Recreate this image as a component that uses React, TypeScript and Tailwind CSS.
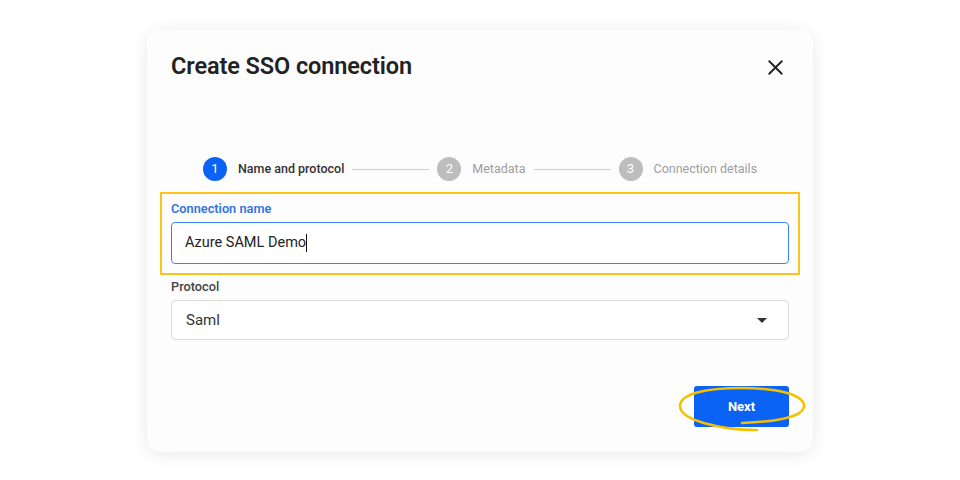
import { X } from "lucide-react";

const steps = [
  { n: 1, label: "Name and protocol", active: true },
  { n: 2, label: "Metadata", active: false },
  { n: 3, label: "Connection details", active: false },
];

export default function App() {
  return (
    <div
      className="min-h-screen w-full bg-white flex justify-center pt-[30px]"
      style={{ fontFamily: "Roboto, 'Liberation Sans', sans-serif" }}
    >
      <div className="w-[666px] h-[422px] rounded-[14px] bg-[#fdfdfd] shadow-[0_2px_18px_rgba(0,0,0,0.09)] px-[24px] pt-[21px]">
        <div className="flex items-center justify-between h-[32px]">
          <h1 className="text-[23.5px] font-semibold text-[#222] tracking-[-0.1px]">Create SSO connection</h1>
          <X className="w-[25px] h-[25px] text-[#222] mr-[1px]" strokeWidth={1.8} />
        </div>

        <div className="mt-[74px] flex items-center justify-center h-[24px]">
          {steps.map((s, i) => (
            <div key={s.n} className="flex items-center">
              <div
                className={
                  "w-[24px] h-[24px] rounded-full flex items-center justify-center text-[13px] text-white " +
                  (s.active ? "bg-[#0b63f6]" : "bg-[#bdbdbd]")
                }
              >
                {s.n}
              </div>
              <span
                className={
                  "ml-[11px] text-[12.5px] " +
                  (s.active ? "font-medium text-[#333]" : "text-[#9e9e9e]")
                }
              >
                {s.label}
              </span>
              {i < steps.length - 1 && <div className="mx-[8px] w-[77px] h-px bg-[#cfcfcf]" />}
            </div>
          ))}
        </div>

        <div className="mt-[11px] -mx-[11px] border-2 border-[#fcc419] px-[9px] pt-[7px] pb-[9px]">
          <div className="text-[12.75px] leading-[16px] font-semibold text-[#2f74e0]">Connection name</div>
          <div className="mt-[5px] h-[42px] rounded-[4px] border border-[#3b82f6] bg-white flex items-center px-[13px]">
            <span className="text-[14.5px] text-[#222]">Azure SAML Demo</span>
            <span className="w-px h-[18px] bg-[#111]" />
          </div>
        </div>

        <div className="mt-[4px] text-[12.75px] leading-[16px] font-medium text-[#444]">Protocol</div>
        <div className="mt-[5px] h-[40px] rounded-[4px] border border-[#d9d9d9] bg-white flex items-center justify-between pl-[14px] pr-[14px]">
          <span className="text-[15px] text-[#333]">Saml</span>
          <svg viewBox="0 0 24 24" className="w-[24px] h-[24px]" fill="#333">
            <path d="M7 10l5 5 5-5z" />
          </svg>
        </div>

        <div className="mt-[46px] flex justify-end">
          <div className="relative">
            <button className="w-[95px] h-[41px] rounded-[3px] bg-[#0b63f6] text-white text-[13px] font-bold">
              Next
            </button>
            <svg
              className="absolute left-[-24px] top-[-6px] w-[145px] h-[60px] pointer-events-none"
              viewBox="0 0 145 60"
              fill="none"
            >
              <path
                d="M72 43 C100 42, 134 38, 134 26 C134 14, 105 8, 72 8 C35 8, 10 14, 10 26 C10 40, 50 50, 87 50"
                stroke="#f5c000"
                strokeWidth="2.5"
                strokeLinecap="round"
              />
            </svg>
          </div>
        </div>
      </div>
    </div>
  );
}
